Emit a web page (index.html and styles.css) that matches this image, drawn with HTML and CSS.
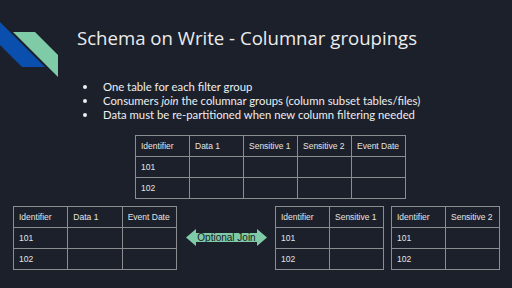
FILE: index.html
```html
<!DOCTYPE html>
<html>
<head>
<meta charset="utf-8">
<link rel="stylesheet" href="styles.css">
</head>
<body>
<div class="slide">
  <svg class="logo" width="60" height="80" viewBox="0 0 60 80">
    <polygon points="0,22 45,67 22,67 0,45" fill="#0b4fae"/>
    <polygon points="13,32 35,32 58,55 58,77" fill="#7fcba8"/>
  </svg>
  <h1 class="title">Schema on Write - Columnar groupings</h1>
  <ul class="bullets">
    <li>One table for each filter group</li>
    <li>Consumers <em>join</em> the columnar groups (column subset tables/files)</li>
    <li>Data must be re-partitioned when new column filtering needed</li>
  </ul>
  <table class="grid top-table">
    <tr><td>Identifier</td><td>Data 1</td><td>Sensitive 1</td><td>Sensitive 2</td><td>Event Date</td></tr>
    <tr><td>101</td><td></td><td></td><td></td><td></td></tr>
    <tr><td>102</td><td></td><td></td><td></td><td></td></tr>
  </table>
  <div class="bottom">
    <table class="grid t3">
      <tr><td>Identifier</td><td>Data 1</td><td>Event Date</td></tr>
      <tr><td>101</td><td></td><td></td></tr>
      <tr><td>102</td><td></td><td></td></tr>
    </table>
    <div class="arrow"><span>Optional Join</span></div>
    <div class="pair">
      <table class="grid t2">
        <tr><td>Identifier</td><td>Sensitive 1</td></tr>
        <tr><td>101</td><td></td></tr>
        <tr><td>102</td><td></td></tr>
      </table>
      <table class="grid t2">
        <tr><td>Identifier</td><td>Sensitive 2</td></tr>
        <tr><td>101</td><td></td></tr>
        <tr><td>102</td><td></td></tr>
      </table>
    </div>
  </div>
</div>
</body>
</html>
```
FILE: styles.css
```css
html, body {
  margin: 0;
  padding: 0;
  background: #1b202b;
}
.slide {
  position: relative;
  width: 512px;
  height: 288px;
  overflow: hidden;
  background: #1b202b;
  padding-top: 27px;
  box-sizing: border-box;
}
.logo {
  position: absolute;
  left: 0;
  top: 0;
}
.title {
  margin: 0 0 0 77px;
  font-family: "Open Sans", sans-serif;
  font-weight: 400;
  font-size: 18.6px;
  line-height: 22px;
  color: #ececec;
}
.bullets {
  list-style: none;
  margin: 31px 0 0 0;
  padding: 0 0 0 103px;
  font-family: Lato, sans-serif;
  font-size: 11.3px;
  line-height: 14px;
  color: #eeeeee;
}
.bullets li {
  position: relative;
}
.bullets li::before {
  content: "";
  position: absolute;
  left: -20px;
  top: 5px;
  width: 4px;
  height: 4px;
  border-radius: 50%;
  background: #eeeeee;
}
.grid {
  border-collapse: collapse;
  table-layout: fixed;
  font-family: "Liberation Sans", Arial, sans-serif;
  font-size: 8.5px;
  color: #e4e4e4;
}
.grid td {
  border: 1px solid #8b8d90;
  height: 21px;
  padding: 0 0 0 5px;
  box-sizing: border-box;
  white-space: nowrap;
  overflow: hidden;
}
.top-table {
  margin: 13px 0 0 135px;
  width: 271px;
}
.bottom {
  display: flex;
  align-items: flex-start;
  margin: 7px 0 0 13px;
}
.pair {
  display: flex;
  gap: 7px;
}
.t3 {
  width: 164px;
}
.t2 {
  width: 109px;
}
.arrow {
  margin: 23px 8px 0 9px;
  width: 81px;
  height: 17px;
  background: #7fcba8;
  clip-path: polygon(0 50%, 10px 0, 10px 4px, 71px 4px, 71px 0, 100% 50%, 71px 100%, 71px 13px, 10px 13px, 10px 100%);
  display: flex;
  align-items: center;
  justify-content: center;
}
.arrow span {
  font-family: "Liberation Sans", Arial, sans-serif;
  font-size: 10px;
  color: #1a1a1a;
  line-height: 10px;
}
```
